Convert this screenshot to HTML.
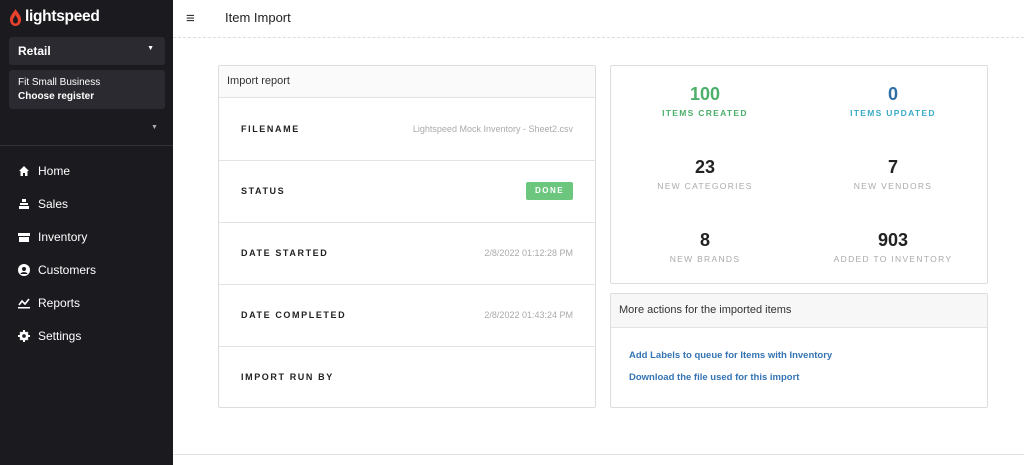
<!DOCTYPE html>
<html><head><meta charset="utf-8"><style>
*{box-sizing:border-box;margin:0;padding:0}
body{width:1024px;height:465px;overflow:hidden;background:#fff;font-family:"Liberation Sans",sans-serif;position:relative}
.sb{position:absolute;left:0;top:0;width:173px;height:465px;background:#1b1a1f;color:#fff}
.abs{position:absolute}
.card{position:absolute;border:1px solid #ddd;background:#fff;border-radius:2px}
.lbl{position:absolute;left:22px;font-size:9px;font-weight:bold;letter-spacing:1.6px;color:#222}
.val{position:absolute;right:22px;font-size:9px;color:#aaa}
.sep{position:absolute;left:0;right:0;height:1px;background:#e3e3e3}
.st{position:absolute;width:50%;text-align:center}
.st b{display:block;font-size:18px;color:#222}
.st span{display:block;font-size:8.5px;letter-spacing:1.3px;color:#aaa;margin-top:3px}
.nav{position:absolute;left:18px;font-size:12px;color:#fff;display:flex;align-items:center}
.nav svg{width:12px;height:12px;margin-right:8px;fill:#fff}
</style></head><body>
<div class="sb">
 <svg class="abs" style="left:9px;top:9px" width="13" height="18" viewBox="0 0 13 18"><path d="M6.5 0 C5 3 1 6 1 10.5 C1 14.5 3.5 17 6.5 17 C9.5 17 12 14.5 12 10.5 C12 6 8 3 6.5 0Z" fill="#e8412c"/><path d="M6.5 6 C5.5 8 4 9.5 4 11.5 C4 13.3 5 14.5 6.5 14.5 C8 14.5 9 13.3 9 11.5 C9 9.5 7.5 8 6.5 6Z" fill="#1b1a1f"/></svg>
 <div class="abs" style="left:25px;top:8px;font-size:15.5px;font-weight:bold;letter-spacing:-0.3px">lightspeed</div>
 <div class="abs" style="left:9px;top:37px;width:156px;height:28px;background:#2b2a30;border-radius:3px;font-size:12px;font-weight:bold;padding:7px 9px">Retail<span style="position:absolute;right:11px;top:8px;font-size:7px">▼</span></div>
 <div class="abs" style="left:9px;top:70px;width:156px;height:39px;background:#2b2a30;border-radius:3px;font-size:10px;padding:6px 9px;line-height:14px">Fit Small Business<br><b>Choose register</b></div>
 <div class="abs" style="left:151px;top:124px;font-size:7px;color:#aaa">▼</div>
 <div class="abs" style="left:0;top:145px;width:173px;height:1px;background:#333"></div>
 <div class="nav" style="top:164px"><svg viewBox="0 0 12 12"><path d="M6 1 L11 6 H9.5 V11 H7 V8 H5 V11 H2.5 V6 H1Z"/></svg>Home</div>
 <div class="nav" style="top:197px"><svg viewBox="0 0 12 12"><rect x="4" y="1" width="4" height="3"/><rect x="2" y="5" width="8" height="2"/><rect x="1" y="8" width="10" height="3"/></svg>Sales</div>
 <div class="nav" style="top:230px"><svg viewBox="0 0 12 12"><rect x="0" y="2" width="12" height="3"/><rect x="1" y="6" width="10" height="5"/></svg>Inventory</div>
 <div class="nav" style="top:263px"><svg viewBox="0 0 12 12"><circle cx="6" cy="6" r="6"/><circle cx="6" cy="5" r="2" fill="#1b1a1f"/><path d="M2.5 10 C3 7.5 9 7.5 9.5 10Z" fill="#1b1a1f"/></svg>Customers</div>
 <div class="nav" style="top:296px"><svg viewBox="0 0 12 12"><path d="M1 8 L4 4 L7 7 L11 2" stroke="#fff" stroke-width="1.6" fill="none"/><rect x="0" y="10" width="12" height="1.5"/></svg>Reports</div>
 <div class="nav" style="top:329px"><svg viewBox="0 0 12 12"><circle cx="6" cy="6" r="4.5"/><path d="M5 0h2v12H5zM0 5h12v2H0z"/><path d="M1.5 2.9L2.9 1.5 10.5 9.1 9.1 10.5zM9.1 1.5L10.5 2.9 2.9 10.5 1.5 9.1z"/><circle cx="6" cy="6" r="1.8" fill="#1b1a1f"/></svg>Settings</div>
</div>
<div class="abs" style="left:186px;top:10px;font-size:15px;color:#333">≡</div>
<div class="abs" style="left:225px;top:10px;font-size:13px;color:#222">Item Import</div>
<div class="abs" style="left:173px;top:37px;width:851px;border-top:1px dashed #ddd"></div>

<div class="card" style="left:218px;top:65px;width:378px;height:343px">
 <div style="height:32px;background:#fafafa;border-bottom:1px solid #e3e3e3;font-size:11px;color:#333;padding:9px 8px">Import report</div>
 <div class="lbl" style="top:58px">FILENAME</div><div class="val" style="top:58px">Lightspeed Mock Inventory - Sheet2.csv</div>
 <div class="sep" style="top:94px"></div>
 <div class="lbl" style="top:120px">STATUS</div>
 <div class="abs" style="right:22px;top:116px;width:47px;height:18px;background:#6cc67e;border-radius:2px;color:#fff;font-size:8px;font-weight:bold;letter-spacing:1.5px;text-align:center;line-height:18px">DONE</div>
 <div class="sep" style="top:156px"></div>
 <div class="lbl" style="top:182px">DATE STARTED</div><div class="val" style="top:182px">2/8/2022 01:12:28 PM</div>
 <div class="sep" style="top:218px"></div>
 <div class="lbl" style="top:244px">DATE COMPLETED</div><div class="val" style="top:244px">2/8/2022 01:43:24 PM</div>
 <div class="sep" style="top:280px"></div>
 <div class="lbl" style="top:306px">IMPORT RUN BY</div>
</div>

<div class="card" style="left:610px;top:65px;width:378px;height:219px">
 <div class="st" style="left:0;top:18px"><b style="color:#4caf6a">100</b><span style="color:#4caf6a;font-weight:bold">ITEMS CREATED</span></div>
 <div class="st" style="left:50%;top:18px"><b style="color:#2f6fa6">0</b><span style="color:#3aabc6;font-weight:bold">ITEMS UPDATED</span></div>
 <div class="st" style="left:0;top:91px"><b>23</b><span>NEW CATEGORIES</span></div>
 <div class="st" style="left:50%;top:91px"><b>7</b><span>NEW VENDORS</span></div>
 <div class="st" style="left:0;top:164px"><b>8</b><span>NEW BRANDS</span></div>
 <div class="st" style="left:50%;top:164px"><b>903</b><span>ADDED TO INVENTORY</span></div>
</div>

<div class="card" style="left:610px;top:293px;width:378px;height:115px">
 <div style="height:34px;background:#f7f7f7;border-bottom:1px solid #e3e3e3;font-size:11px;color:#333;padding:10px 8px">More actions for the imported items</div>
 <div class="abs" style="left:18px;top:56px;font-size:9.5px;font-weight:bold;color:#3574b3">Add Labels to queue for Items with Inventory</div>
 <div class="abs" style="left:18px;top:78px;font-size:9.5px;font-weight:bold;color:#3574b3">Download the file used for this import</div>
</div>
<div class="abs" style="left:173px;top:454px;width:851px;height:1px;background:#e3e3e3"></div>
</body></html>
